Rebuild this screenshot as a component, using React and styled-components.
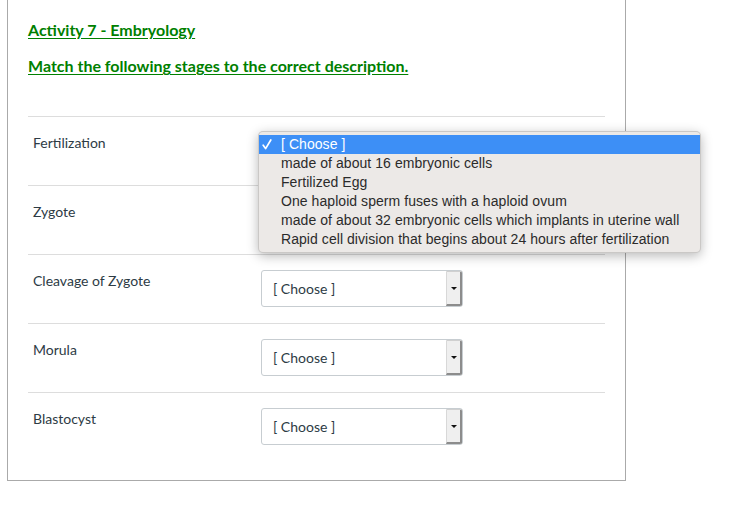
import React from "react";
import styled, { createGlobalStyle } from "styled-components";

const GlobalStyle = createGlobalStyle`
  body {
    margin: 0;
    background: #fff;
    font-family: Lato, "Open Sans", sans-serif;
  }
`;

const Panel = styled.div`
  box-sizing: border-box;
  width: 619px;
  margin-left: 7px;
  padding: 20px 20px 19px;
  border: 1px solid #aaaaaa;
  border-top: none;
`;

const Title = styled.div`
  font-size: 16px;
  line-height: 20px;
  font-weight: 700;
  color: #008000;
  text-decoration: underline;
  text-underline-offset: 2px;
  margin-bottom: ${(p) => p.$gap || 0}px;
`;

const Row = styled.div`
  position: relative;
  display: flex;
  align-items: flex-start;
  height: 68px;
  border-top: 1px solid #dddddd;
`;

const Label = styled.div`
  width: 228px;
  padding: 16px 0 0 5px;
  font-size: 14px;
  line-height: 20px;
  color: #2d3b45;
`;

const Select = styled.div`
  box-sizing: border-box;
  display: flex;
  align-items: stretch;
  width: 202px;
  height: 37px;
  margin-top: 15px;
  border: 1px solid #c7cdd1;
  border-radius: 3px;
  background: #fff;
`;

const SelectText = styled.div`
  flex: 1;
  display: flex;
  align-items: center;
  padding-left: 11px;
  font-size: 14px;
  color: #2d3b45;
`;

const ArrowButton = styled.div`
  box-sizing: border-box;
  width: 16px;
  display: flex;
  align-items: center;
  justify-content: center;
  background: #efefef;
  border-left: 1px solid #d8d8d8;
  border-right: 2px solid #8c8c8c;
  border-bottom: 2px solid #8c8c8c;
  border-top: 1px solid #d0d0d0;
  border-radius: 0 2px 2px 0;

  &::after {
    content: "";
    border-left: 3px solid transparent;
    border-right: 3px solid transparent;
    border-top: 3px solid #111;
  }
`;

const Menu = styled.div`
  position: absolute;
  left: 230px;
  top: 14px;
  z-index: 2;
  box-sizing: border-box;
  width: 443px;
  padding: 3px 0 3px;
  background: #ece9e7;
  border: 1px solid rgba(0, 0, 0, 0.14);
  border-radius: 5px;
  box-shadow: 0 3px 12px rgba(0, 0, 0, 0.28);
  font-family: "Liberation Sans", Arial, sans-serif;
  font-size: 14px;
  letter-spacing: 0.06px;
`;

const MenuItem = styled.div`
  position: relative;
  height: 19px;
  line-height: 19px;
  padding-left: 22px;
  white-space: nowrap;
  color: ${(p) => (p.$active ? "#fff" : "#2b2b2b")};
  background: ${(p) => (p.$active ? "#3d8ff6" : "transparent")};
`;

const Check = styled.svg`
  position: absolute;
  left: 3px;
  top: 4px;
`;

const options = [
  "made of about 16 embryonic cells",
  "Fertilized Egg",
  "One haploid sperm fuses with a haploid ovum",
  "made of about 32 embryonic cells which implants in uterine wall",
  "Rapid cell division that begins about 24 hours after fertilization",
];

const stages = ["Fertilization", "Zygote", "Cleavage of Zygote", "Morula", "Blastocyst"];

const App = () => {
  return (
    <>
      <GlobalStyle />
      <Panel>
        <Title $gap={16}>Activity 7 - Embryology</Title>
        <Title $gap={40}>Match the following stages to the correct description.</Title>
        {stages.map((stage, i) => (
          <Row key={stage}>
            <Label>{stage}</Label>
            <Select>
              <SelectText>[ Choose ]</SelectText>
              <ArrowButton />
            </Select>
            {i === 0 && (
              <Menu>
                <MenuItem $active>
                  <Check width="10" height="11" viewBox="0 0 10 11">
                    <path
                      d="M1.2 6.2 L3.6 9.6 L8.8 1"
                      fill="none"
                      stroke="#fff"
                      strokeWidth="1.7"
                      strokeLinecap="round"
                      strokeLinejoin="round"
                    />
                  </Check>
                  [ Choose ]
                </MenuItem>
                {options.map((opt) => (
                  <MenuItem key={opt}>{opt}</MenuItem>
                ))}
              </Menu>
            )}
          </Row>
        ))}
      </Panel>
    </>
  );
};

export default App;
